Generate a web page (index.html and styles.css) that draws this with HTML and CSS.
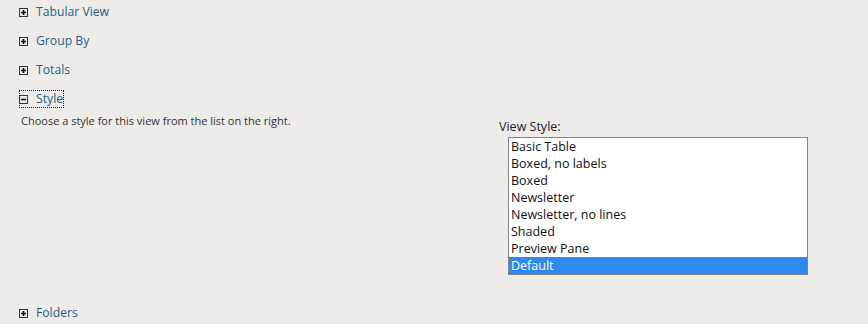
FILE: index.html
```html
<!DOCTYPE html>
<html>
<head>
<meta charset="utf-8">
<link rel="stylesheet" href="styles.css">
</head>
<body>
<div class="page">
  <div class="section"><span class="toggle"><svg class="ico" viewBox="0 0 9 9" width="9" height="9"><rect x="0.5" y="0.5" width="8" height="8" fill="#ececec" stroke="#333"/><path d="M2 4.5h5M4.5 2v5" stroke="#111" stroke-width="1.6"/></svg><span class="label">Tabular View</span></span></div>
  <div class="section"><span class="toggle"><svg class="ico" viewBox="0 0 9 9" width="9" height="9"><rect x="0.5" y="0.5" width="8" height="8" fill="#ececec" stroke="#333"/><path d="M2 4.5h5M4.5 2v5" stroke="#111" stroke-width="1.6"/></svg><span class="label">Group By</span></span></div>
  <div class="section"><span class="toggle"><svg class="ico" viewBox="0 0 9 9" width="9" height="9"><rect x="0.5" y="0.5" width="8" height="8" fill="#ececec" stroke="#333"/><path d="M2 4.5h5M4.5 2v5" stroke="#111" stroke-width="1.6"/></svg><span class="label">Totals</span></span></div>
  <div class="section open"><span class="toggle focused"><svg class="ico" viewBox="0 0 9 9" width="9" height="9"><rect x="0.5" y="0.5" width="8" height="8" fill="#ececec" stroke="#333"/><path d="M2 4.5h5" stroke="#111" stroke-width="1.6"/></svg><span class="label">Style</span></span></div>
  <div class="style-body">
    <p class="desc">Choose a style for this view from the list on the right.</p>
    <div class="picker">
      <div class="picker-label">View Style:</div>
      <ul class="listbox">
        <li>Basic Table</li>
        <li>Boxed, no labels</li>
        <li>Boxed</li>
        <li>Newsletter</li>
        <li>Newsletter, no lines</li>
        <li>Shaded</li>
        <li>Preview Pane</li>
        <li class="selected">Default</li>
      </ul>
    </div>
  </div>
  <div class="section"><span class="toggle"><svg class="ico" viewBox="0 0 9 9" width="9" height="9"><rect x="0.5" y="0.5" width="8" height="8" fill="#ececec" stroke="#333"/><path d="M2 4.5h5M4.5 2v5" stroke="#111" stroke-width="1.6"/></svg><span class="label">Folders</span></span></div>
</div>
</body>
</html>
```

FILE: styles.css
```css
html, body {
  margin: 0;
  padding: 0;
  background: #eeece9;
}
body {
  font-family: "Open Sans", "Noto Sans", sans-serif;
  width: 868px;
  height: 324px;
  overflow: hidden;
}
.page {
  padding: 3px 0 0 19px;
}
.section {
  height: 29px;
  display: flex;
  align-items: flex-start;
}
.toggle {
  display: inline-flex;
  align-items: center;
  height: 18px;
  gap: 8px;
}
.ico {
  display: block;
  flex: none;
}
.label {
  font-size: 12.2px;
  color: #1e5f86;
  line-height: 18px;
}
.focused {
  outline: 1px dotted #222;
  outline-offset: -1px;
  padding-right: 1px;
}
.style-body {
  display: flex;
  height: 190px;
  margin-top: -5px;
}
.desc {
  margin: 0 0 0 2px;
  font-size: 11px;
  color: #333;
  width: 478px;
  line-height: 14px;
}
.picker {
  margin-top: 6px;
}
.picker-label {
  font-size: 12.5px;
  color: #222;
  line-height: 14px;
}
.listbox {
  list-style: none;
  margin: 3px 0 0 9px;
  padding: 0;
  width: 298px;
  border: 1px solid #848484;
  background: #fff;
}
.listbox li {
  font-size: 12.5px;
  line-height: 17px;
  height: 17px;
  padding-left: 2px;
  color: #111;
}
.listbox li.selected {
  background: #2f88ee;
  color: #fff;
}
```
